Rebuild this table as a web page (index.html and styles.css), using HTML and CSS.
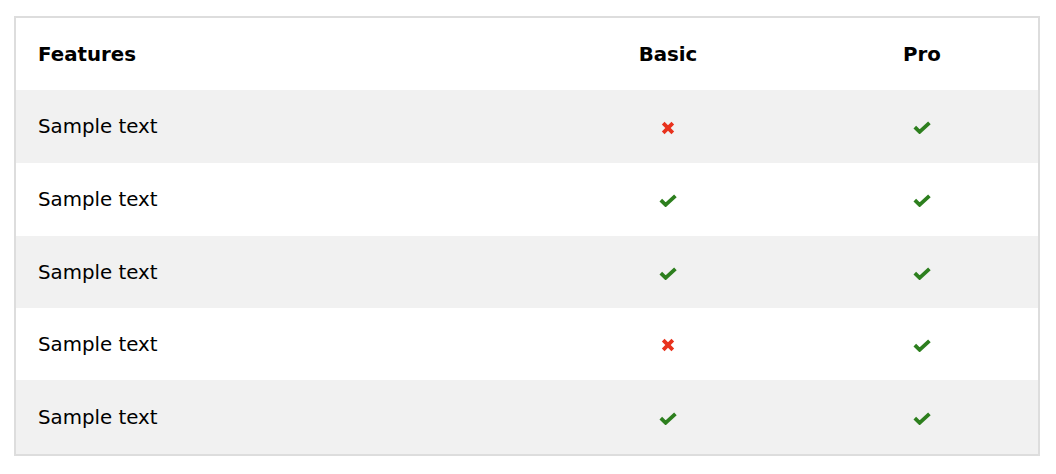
FILE: index.html
```html
<!DOCTYPE html>
<html>
<head>
<meta charset="utf-8">
<link rel="stylesheet" href="styles.css">
</head>
<body>
<table class="compare">
  <thead>
    <tr><th class="feat">Features</th><th class="basic">Basic</th><th class="pro">Pro</th></tr>
  </thead>
  <tbody>
    <tr class="alt r1"><td class="feat">Sample text</td><td class="mark"><svg class="no" viewBox="0 0 14 14"><path d="M2.2 2.2L11.8 11.8M11.8 2.2L2.2 11.8"/></svg></td><td class="mark"><svg class="yes" viewBox="0 0 18 13"><path d="M1.8 6.2L6.6 10.8L16.4 1.8"/></svg></td></tr>
    <tr class="r2"><td class="feat">Sample text</td><td class="mark"><svg class="yes" viewBox="0 0 18 13"><path d="M1.8 6.2L6.6 10.8L16.4 1.8"/></svg></td><td class="mark"><svg class="yes" viewBox="0 0 18 13"><path d="M1.8 6.2L6.6 10.8L16.4 1.8"/></svg></td></tr>
    <tr class="alt r3"><td class="feat">Sample text</td><td class="mark"><svg class="yes" viewBox="0 0 18 13"><path d="M1.8 6.2L6.6 10.8L16.4 1.8"/></svg></td><td class="mark"><svg class="yes" viewBox="0 0 18 13"><path d="M1.8 6.2L6.6 10.8L16.4 1.8"/></svg></td></tr>
    <tr class="r4"><td class="feat">Sample text</td><td class="mark"><svg class="no" viewBox="0 0 14 14"><path d="M2.2 2.2L11.8 11.8M11.8 2.2L2.2 11.8"/></svg></td><td class="mark"><svg class="yes" viewBox="0 0 18 13"><path d="M1.8 6.2L6.6 10.8L16.4 1.8"/></svg></td></tr>
    <tr class="alt r5"><td class="feat">Sample text</td><td class="mark"><svg class="yes" viewBox="0 0 18 13"><path d="M1.8 6.2L6.6 10.8L16.4 1.8"/></svg></td><td class="mark"><svg class="yes" viewBox="0 0 18 13"><path d="M1.8 6.2L6.6 10.8L16.4 1.8"/></svg></td></tr>
  </tbody>
</table>
</body>
</html>
```

FILE: styles.css
```css
html, body {
  margin: 0;
  padding: 0;
  background: #ffffff;
}
body {
  padding: 16px 16px 0 14px;
  font-family: "DejaVu Sans", Verdana, sans-serif;
  font-size: 19.8px;
  color: #000;
}
.compare {
  width: 100%;
  border-collapse: collapse;
  border: 2px solid #dddddd;
}
.compare th, .compare td {
  padding: 0;
  vertical-align: middle;
}
.compare thead th { height: 72px; }
.compare th {
  font-weight: bold;
  font-size: 19.8px;
}
.compare .feat {
  text-align: left;
  padding-left: 22px;
}
.compare .basic, .compare .mark:nth-child(2) {
  width: 276px;
  text-align: center;
}
.compare .pro, .compare .mark:nth-child(3) {
  width: 232px;
  text-align: center;
}
.compare tr.alt { background: #f1f1f1; }
.compare .r1 td, .compare .r2 td { height: 73px; }
.compare .r3 td, .compare .r4 td { height: 72px; }
.compare .r5 td { height: 74px; }
.mark svg {
  display: inline-block;
  vertical-align: middle;
  fill: none;
}
.mark svg.yes {
  width: 18px;
  height: 13px;
  stroke: #2d7f1e;
  stroke-width: 3.8;
  stroke-linejoin: miter;
}
.mark svg.no {
  width: 14px;
  height: 14px;
  stroke: #e8321d;
  stroke-width: 3.8;
}
```
